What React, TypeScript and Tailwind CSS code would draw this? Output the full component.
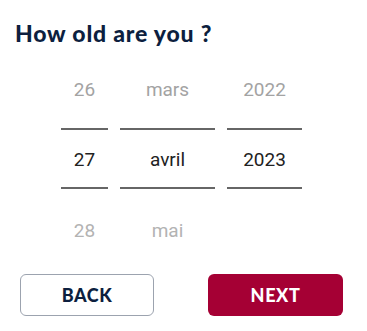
import React from "react";

const columns = [
  { width: "w-[47px]", items: ["26", "27", "28"] },
  { width: "w-[95px]", items: ["mars", "avril", "mai"] },
  { width: "w-[75px]", items: ["2022", "2023", ""] },
];

function PickerColumn({ width, items }: { width: string; items: string[] }) {
  return (
    <div className={`flex flex-col ${width}`}>
      <div className="h-[40px] flex items-center justify-center text-[#a3a3a3]">{items[0]}</div>
      <div className="h-[18px]" />
      <div className="h-[2px] bg-[#666666]" />
      <div className="h-[57px] pt-[3px] flex items-center justify-center text-[#222222]">{items[1]}</div>
      <div className="h-[2px] bg-[#666666]" />
      <div className="h-[22px]" />
      <div className="h-[40px] flex items-center justify-center text-[#b3b3b3]">{items[2]}</div>
    </div>
  );
}

export default function App() {
  return (
    <div className="w-[367px] h-[331px] bg-white overflow-hidden">
      <h1 className="pl-[15px] pt-[19px] text-[23px] leading-[28px] tracking-[0.8px] font-black text-[#0d1f3f] font-['Lato',sans-serif]">
        How old are you ?
      </h1>

      {/* date wheel */}
      <div className="mt-[23px] pl-[61px] flex gap-[12px] text-[19px] font-['Roboto',sans-serif]">
        {columns.map((col, i) => (
          <PickerColumn key={i} width={col.width} items={col.items} />
        ))}
      </div>

      <div className="mt-[23px] flex pl-[20px] gap-[54px] font-['Lato',sans-serif]">
        <button className="w-[134px] h-[42px] rounded-[6px] border border-[#9ca3af] bg-white text-[#0d1f3f] text-[18px] tracking-[0.6px] font-black">
          BACK
        </button>
        <button className="w-[135px] h-[42px] rounded-[6px] bg-[#a50034] text-white text-[18px] tracking-[0.6px] font-black">
          NEXT
        </button>
      </div>
    </div>
  );
}
